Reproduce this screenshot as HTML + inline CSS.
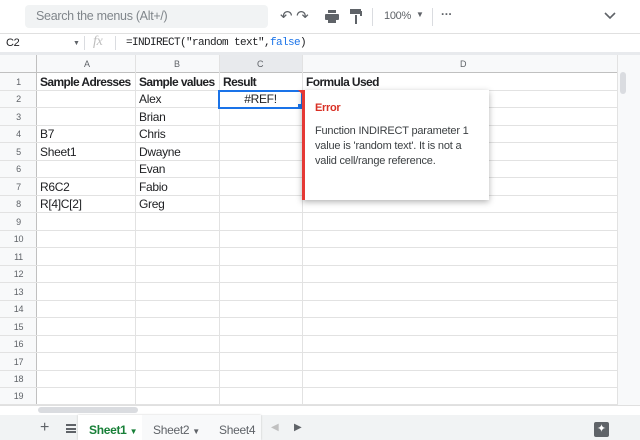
<!DOCTYPE html><html><head><style>
*{box-sizing:border-box;margin:0;padding:0}
body{width:640px;height:440px;overflow:hidden;background:#fff;font-family:"Liberation Sans",sans-serif;position:relative}
.a{position:absolute}
.t{font-size:12px;color:#202124;white-space:nowrap;letter-spacing:-0.3px}
.b{font-weight:bold;letter-spacing:-0.6px}
</style></head><body>
<div class="a" style="left:0;top:0;width:640px;height:33px;background:#fff"></div>
<div class="a" style="left:25px;top:5px;width:243px;height:23px;background:#f1f3f4;border-radius:4px"></div>
<div class="a t" style="left:36px;top:9px;font-size:12.5px;color:#80868b">Search the menus (Alt+/)</div>
<div class="a t" style="left:280px;top:7px;font-size:15px;color:#5f6368">↶ ↷ </div>
<svg class="a" style="left:325px;top:10px" width="14" height="13"><rect x="3" y="0" width="8" height="3" fill="#5f6368"/><rect x="0" y="4" width="14" height="6" rx="1" fill="#5f6368"/><rect x="3" y="8" width="8" height="5" fill="#5f6368"/></svg>
<svg class="a" style="left:350px;top:9px" width="12" height="15"><rect x="0" y="0" width="11" height="5" fill="#5f6368"/><rect x="10" y="2" width="2" height="5" fill="#5f6368"/><rect x="5" y="6" width="2" height="9" fill="#5f6368"/></svg>
<div class="a" style="left:372px;top:8px;width:1px;height:18px;background:#dadce0"></div>
<div class="a t" style="left:384px;top:10px;font-size:11px;color:#5f6368">100%</div>
<div class="a t" style="left:416px;top:10px;font-size:8px;color:#5f6368">▼</div>
<div class="a" style="left:432px;top:8px;width:1px;height:18px;background:#dadce0"></div>
<div class="a t" style="left:441px;top:7px;font-size:12px;color:#5f6368;font-weight:bold">···</div>
<svg class="a" style="left:604px;top:12px" width="12" height="8"><path d="M1 1 L6 6 L11 1" stroke="#5f6368" stroke-width="1.6" fill="none"/></svg>
<div class="a" style="left:0;top:33px;width:640px;height:1px;background:#e0e0e0"></div>
<div class="a t" style="left:6px;top:37px;font-size:11px">C2</div>
<div class="a t" style="left:73px;top:40px;font-size:7px;color:#5f6368">▼</div>
<div class="a" style="left:84px;top:36px;width:1px;height:14px;background:#dadce0"></div>
<div class="a t" style="left:93px;top:34px;font-size:14px;color:#bdbdbd;font-family:'Liberation Serif',serif;font-style:italic">fx</div>
<div class="a" style="left:115px;top:36px;width:1px;height:14px;background:#dadce0"></div>
<div class="a t" style="left:126px;top:37px;font-size:11px;font-family:'Liberation Mono',monospace;letter-spacing:-0.6px">=INDIRECT("random text",<span style="color:#1a73e8">false</span>)</div>
<div class="a" style="left:0;top:52px;width:640px;height:3px;background:#e8eaed"></div>
<div class="a" style="left:0;top:55px;width:617px;height:18px;background:#f8f9fa;border-bottom:1px solid #c0c0c0"></div>
<div class="a" style="left:219px;top:55px;width:83px;height:18px;background:#e8eaed;border-bottom:1px solid #c0c0c0"></div>
<div class="a t" style="left:84px;top:59px;font-size:9px;color:#5f6368">A</div>
<div class="a t" style="left:174px;top:59px;font-size:9px;color:#5f6368">B</div>
<div class="a t" style="left:257px;top:59px;font-size:9px;color:#5f6368">C</div>
<div class="a t" style="left:460px;top:59px;font-size:9px;color:#5f6368">D</div>
<div class="a" style="left:0;top:73px;width:37px;height:332px;background:#f8f9fa"></div>
<div class="a" style="left:36px;top:55px;width:1px;height:350px;background:#c0c0c0"></div>
<div class="a" style="left:135px;top:55px;width:1px;height:350px;background:#e2e2e2"></div>
<div class="a" style="left:219px;top:55px;width:1px;height:350px;background:#e2e2e2"></div>
<div class="a" style="left:302px;top:55px;width:1px;height:350px;background:#e2e2e2"></div>
<div class="a" style="left:617px;top:55px;width:1px;height:350px;background:#e2e2e2"></div>
<div class="a" style="left:618px;top:55px;width:22px;height:360px;background:#f8f9fa"></div>
<div class="a" style="left:620px;top:72px;width:6px;height:22px;background:#dadce0;border-radius:3px"></div>
<div id="rows"></div>
<script>
var A=["","","","B7","Sheet1","","R6C2","R[4]C[2]"],B=["","Alex","Brian","Chris","Dwayne","Evan","Fabio","Greg"];
var h="";for(var i=1;i<=19;i++){var y=73+(i-1)*17.47;
h+='<div class="a" style="left:0;top:'+(y+17)+'px;width:617px;height:1px;background:#e2e2e2"></div>';
h+='<div class="a t" style="left:0;width:37px;text-align:center;top:'+(y+4)+'px;font-size:9px;color:#5f6368">'+i+'</div>';
if(i==1){h+='<div class="a t b" style="left:40px;top:'+(y+2)+'px">Sample Adresses</div><div class="a t b" style="left:139px;top:'+(y+2)+'px">Sample values</div><div class="a t b" style="left:223px;top:'+(y+2)+'px">Result</div><div class="a t b" style="left:306px;top:'+(y+2)+'px">Formula Used</div>';}
else if(i<=8){h+='<div class="a t" style="left:40px;top:'+(y+2)+'px">'+A[i-1]+'</div><div class="a t" style="left:139px;top:'+(y+2)+'px">'+B[i-1]+'</div>';}}
document.getElementById("rows").innerHTML=h;
</script>
<div class="a" style="left:218px;top:89.5px;width:85px;height:19px;border:2px solid #1a73e8"></div>
<div class="a t" style="left:219px;width:83px;text-align:center;top:92px">#REF!</div>
<div class="a" style="left:298px;top:104px;width:5px;height:5px;background:#1a73e8"></div>
<div class="a" style="left:302px;top:90px;width:187px;height:110px;background:#fff;box-shadow:0 2px 6px rgba(0,0,0,.3)"></div>
<div class="a" style="left:302px;top:90px;width:3px;height:110px;background:#e53935"></div>
<div class="a" style="left:298px;top:90px;width:0;height:0;border-left:5px solid transparent;border-top:5px solid #e53935"></div>
<div class="a t" style="left:315px;top:102px;font-size:11px;color:#d93025;font-weight:bold">Error</div>
<div class="a" style="left:315px;top:124px;font-size:11px;line-height:15px;color:#3c4043;width:160px;letter-spacing:-0.2px">Function INDIRECT parameter 1 value is 'random text'. It is not a valid cell/range reference.</div>
<div class="a" style="left:0;top:405px;width:640px;height:10px;background:#fff;border-top:1px solid #e0e0e0"></div>
<div class="a" style="left:38px;top:407px;width:100px;height:6px;background:#dadce0;border-radius:3px"></div>
<div class="a" style="left:0;top:415px;width:640px;height:25px;background:#f1f3f4"></div>
<div class="a t" style="left:40px;top:419px;font-size:16px;color:#5f6368">+</div>
<div class="a" style="left:66px;top:424px;width:10px;height:9px;border-top:2px solid #5f6368;border-bottom:2px solid #5f6368"><div style="margin-top:1.5px;height:2px;background:#5f6368"></div></div>
<div class="a" style="left:78px;top:415px;width:183px;height:25px;background:#f8f9fa;box-shadow:0 0 2px rgba(0,0,0,.2)" ></div>
<div class="a" style="left:78px;top:415px;width:64px;height:25px;background:#fff"></div>
<div class="a t" style="left:89px;top:423px;color:#188038;font-weight:bold;font-size:12px">Sheet1 <span style="font-size:8px">▼</span></div>
<div class="a t" style="left:153px;top:423px;color:#5f6368;font-size:12px">Sheet2 <span style="font-size:8px">▼</span></div>
<div class="a t" style="left:219px;top:423px;color:#5f6368;font-size:12px">Sheet4</div>
<div class="a t" style="left:271px;top:422px;color:#c0c0c0;font-size:10px">◀</div>
<div class="a t" style="left:294px;top:422px;color:#5f6368;font-size:10px">▶</div>
<div class="a" style="left:594px;top:422px;width:15px;height:15px;background:#5f6368;border-radius:2px;color:#fff;font-size:11px;text-align:center;line-height:15px">✦</div>
</body></html>
